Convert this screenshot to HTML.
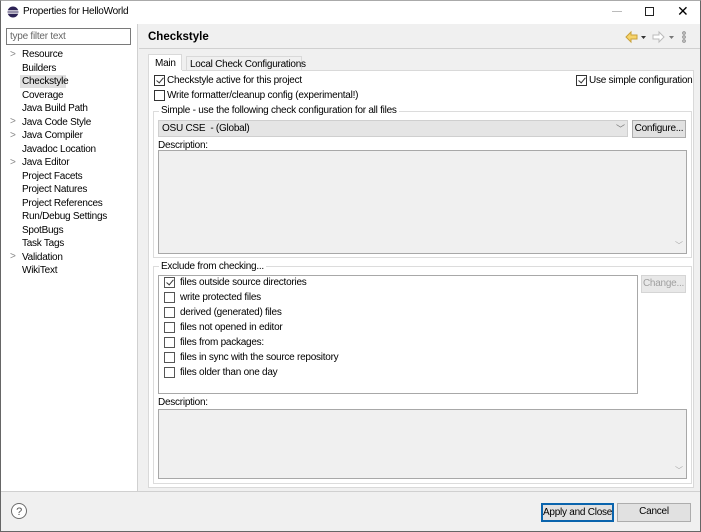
<!DOCTYPE html>
<html><head><style>
*{box-sizing:border-box;margin:0;padding:0}
body{width:701px;height:532px;position:relative;overflow:hidden;background:#f0f0f0;font-family:"Liberation Sans",sans-serif;font-size:10px;letter-spacing:-0.25px;color:#000}
.a{position:absolute;white-space:nowrap}
.cb{position:absolute;width:11px;height:11px;border:1px solid #333;background:#fff}
.cb.on::after{content:"";position:absolute;left:3px;top:0px;width:3px;height:6px;border:solid #333;border-width:0 1.3px 1.3px 0;transform:rotate(40deg)}
.cb.l{border-color:#555}
.btn{position:absolute;background:#e1e1e1;border:1px solid #adadad;text-align:center;line-height:16px;white-space:nowrap}
.tw{position:absolute;left:10px;color:#888;font-size:10px}
</style></head><body>
<div class="a" style="left:0;top:0;width:701px;height:24px;background:#fff"></div>
<svg class="a" style="left:7px;top:6px" width="12" height="12" viewBox="0 0 12 12"><circle cx="6" cy="6" r="5.5" fill="#2c2255"/><rect x="0" y="4.3" width="12" height="1.2" fill="#fff"/><rect x="0" y="6.5" width="12" height="1.2" fill="#fff"/></svg>
<div class="a" style="left:23px;top:6px">Properties for HelloWorld</div>
<div class="a" style="left:612px;top:11px;width:10px;height:1px;background:#bbb"></div>
<div class="a" style="left:645px;top:7px;width:9px;height:9px;border:1px solid #222"></div>
<div class="a" style="left:677px;top:3px;font-size:14px">✕</div>
<div class="a" style="left:0;top:24px;width:138px;height:467px;background:#fff;border-right:1px solid #d0d0d0"></div>
<div class="a" style="left:6px;top:28px;width:125px;height:17px;border:1px solid #7a7a7a;background:#fff"></div>
<div class="a" style="left:10px;top:31px;color:#666">type filter text</div>
<div class="a" style="left:20px;top:75px;width:46px;height:13px;background:#e0e0e0"></div>
<div class="a" style="left:22px;top:48px;line-height:13.5px">Resource<br>Builders<br>Checkstyle<br>Coverage<br>Java Build Path<br>Java Code Style<br>Java Compiler<br>Javadoc Location<br>Java Editor<br>Project Facets<br>Project Natures<br>Project References<br>Run/Debug Settings<br>SpotBugs<br>Task Tags<br>Validation<br>WikiText</div>
<div class="tw" style="top:49px">&gt;</div>
<div class="tw" style="top:116px">&gt;</div>
<div class="tw" style="top:130px">&gt;</div>
<div class="tw" style="top:157px">&gt;</div>
<div class="tw" style="top:251px">&gt;</div>
<div class="a" style="left:148px;top:31px;font-weight:bold;font-size:11.5px;letter-spacing:0">Checkstyle</div>
<div class="a" style="left:139px;top:48px;width:562px;height:1px;background:#d0d0d0"></div>
<svg class="a" style="left:625px;top:30px" width="64" height="14" viewBox="0 0 64 14"><path d="M1 7 L6 2 V5 H12 V9 H6 V12 Z" fill="#f7d46a" stroke="#c9a13a"/><path d="M16 6 h5 l-2.5 3z" fill="#333"/><path d="M39 7 L34 2 V5 H28 V9 H34 V12 Z" fill="#fff" stroke="#bbb"/><path d="M44 6 h5 l-2.5 3z" fill="#777"/><circle cx="59" cy="3" r="1.3" fill="none" stroke="#888"/><circle cx="59" cy="7" r="1.3" fill="none" stroke="#888"/><circle cx="59" cy="11" r="1.3" fill="none" stroke="#888"/></svg>
<div class="a" style="left:148px;top:54px;width:34px;height:17px;background:#fff;border:1px solid #d9d9d9;border-bottom:none"></div>
<div class="a" style="left:155px;top:58px">Main</div>
<div class="a" style="left:186px;top:56px;width:116px;height:14px;background:#f0f0f0;border:1px solid #d9d9d9;border-bottom:none"></div>
<div class="a" style="left:190px;top:59px">Local Check Configurations</div>
<div class="a" style="left:148px;top:70px;width:546px;height:418px;background:#fff;border:1px solid #d9d9d9;border-top:none"></div>
<div class="a" style="left:182px;top:70px;width:512px;height:1px;background:#d9d9d9"></div>
<div class="cb on" style="left:154px;top:75px"></div><div class="a" style="left:167px;top:75px">Checkstyle active for this project</div>
<div class="cb" style="left:154px;top:90px"></div><div class="a" style="left:167px;top:90px">Write formatter/cleanup config (experimental!)</div>
<div class="cb on" style="left:576px;top:75px"></div><div class="a" style="left:589px;top:75px">Use simple configuration</div>
<div class="a" style="left:153px;top:111px;width:539px;height:147px;border:1px solid #dcdcdc"></div>
<div class="a" style="left:159px;top:105px;background:#fff;padding:0 2px">Simple - use the following check configuration for all files</div>
<div class="a" style="left:158px;top:120px;width:470px;height:17px;background:#e5e5e5;border:1px solid #cfcfcf"></div>
<div class="a" style="left:162px;top:123px">OSU CSE&nbsp; - (Global)</div>
<div class="a" style="left:616px;top:122px;color:#777;font-size:9px">﹀</div>
<div class="btn" style="left:632px;top:120px;width:54px;height:18px">Configure...</div>
<div class="a" style="left:158px;top:140px">Description:</div>
<div class="a" style="left:158px;top:150px;width:529px;height:104px;background:#f0f0f0;border:1px solid #a8a8a8"></div>
<div class="a" style="left:675px;top:240px;color:#aaa;font-size:8px">﹀</div>
<div class="a" style="left:153px;top:266px;width:539px;height:218px;border:1px solid #dcdcdc"></div>
<div class="a" style="left:159px;top:261px;background:#fff;padding:0 2px">Exclude from checking...</div>
<div class="a" style="left:158px;top:275px;width:480px;height:119px;background:#fff;border:1px solid #a8a8a8"></div>
<div class="cb on l" style="left:164px;top:277px"></div><div class="a" style="left:180px;top:277px">files outside source directories</div>
<div class="cb l" style="left:164px;top:292px"></div><div class="a" style="left:180px;top:292px">write protected files</div>
<div class="cb l" style="left:164px;top:307px"></div><div class="a" style="left:180px;top:307px">derived (generated) files</div>
<div class="cb l" style="left:164px;top:322px"></div><div class="a" style="left:180px;top:322px">files not opened in editor</div>
<div class="cb l" style="left:164px;top:337px"></div><div class="a" style="left:180px;top:337px">files from packages:</div>
<div class="cb l" style="left:164px;top:352px"></div><div class="a" style="left:180px;top:352px">files in sync with the source repository</div>
<div class="cb l" style="left:164px;top:367px"></div><div class="a" style="left:180px;top:367px">files older than one day</div>
<div class="btn" style="left:641px;top:275px;width:45px;height:18px;color:#a0a0a0;background:#e8e8e8;border-color:#d5d5d5">Change...</div>
<div class="a" style="left:158px;top:397px">Description:</div>
<div class="a" style="left:158px;top:409px;width:529px;height:70px;background:#f0f0f0;border:1px solid #a8a8a8"></div>
<div class="a" style="left:675px;top:465px;color:#aaa;font-size:8px">﹀</div>
<div class="a" style="left:0;top:491px;width:701px;height:1px;background:#d0d0d0"></div>
<svg class="a" style="left:10px;top:502px" width="18" height="18" viewBox="0 0 18 18"><circle cx="9" cy="9" r="7.5" fill="#fff" stroke="#6b6b6b"/><text x="9" y="13" font-size="11" text-anchor="middle" fill="#555" font-family="Liberation Sans">?</text></svg>
<div class="btn" style="left:541px;top:503px;width:73px;height:19px;border:2px solid #0a64ad;line-height:15px">Apply and Close</div>
<div class="btn" style="left:617px;top:503px;width:74px;height:19px">Cancel</div>
<div class="a" style="left:0;top:0;width:701px;height:532px;border:1px solid #666;border-top-color:#aaa"></div>
</body></html>
